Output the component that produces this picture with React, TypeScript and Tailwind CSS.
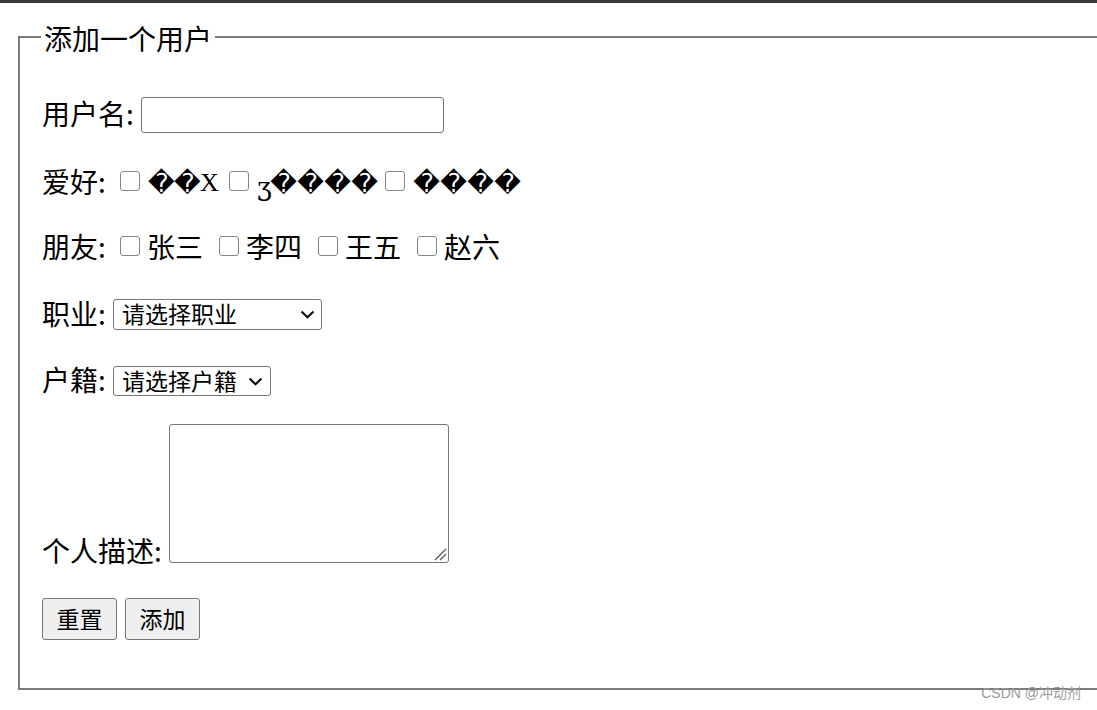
import React from "react";

function Box() {
  return (
    <span className="inline-block w-[20px] h-[20px] mb-[4px] shrink-0 rounded-[3px] border-[1.5px] border-[#858585] bg-white" />
  );
}

function Bad({ n, w = "w-[26px]" }: { n: number; w?: string }) {
  return (
    <>
      {Array.from({ length: n }).map((_, i) => (
        <span
          key={i}
          className={`inline-block ${w} text-center text-[26px] leading-[30px] font-['DejaVu_Sans',sans-serif]`}
        >
          {"\uFFFD"}
        </span>
      ))}
    </>
  );
}

function Chevron() {
  return (
    <svg width="15" height="9" viewBox="0 0 15 9" className="shrink-0">
      <path d="M1.5 1.5 L7.5 7.2 L13.5 1.5" fill="none" stroke="#111" strokeWidth="2.2" />
    </svg>
  );
}

export default function App() {
  return (
    <div className="w-[1097px] h-[710px] overflow-hidden bg-white relative text-black font-['Noto_Sans_CJK_SC',sans-serif]">
      <div className="h-[3px] bg-[#3a3a3a]" />
      <fieldset className="mt-[15px] ml-[18px] w-[1200px] border-2 border-[#7a7a7a] pl-[21px] pb-[48px]">
        <legend className="px-[3px] pt-[5px] h-[37px] text-[28px] leading-[31px]">添加一个用户</legend>

        <div className="mt-[42px] h-[36px] flex items-center">
          <span className="w-[100px] pl-[1px] mb-[3px] text-[28px] leading-[37px]">用户名:</span>
          <span className="w-[303px] h-[36px] rounded-[3px] border border-[#767676]" />
        </div>

        <div className="mt-[32px] h-[36px] flex items-center">
          <span className="w-[79px] pl-[1px] mb-[3px] text-[28px] leading-[37px] shrink-0">爱好:</span>
          <Box />
          <span className="ml-[8px] flex items-center">
            <Bad n={2} />
            <span className="inline-block w-[21px] text-[26px] leading-[30px] font-['Liberation_Serif',serif]">X</span>
          </span>
          <span className="ml-[8px] flex items-center"><Box /></span>
          <span className="ml-[8px] flex items-center">
            <span className="inline-block w-[13px] text-[26px] leading-[30px] mt-[8px] font-['DejaVu_Serif','Liberation_Serif',serif]">ʒ</span>
            <Bad n={4} w="w-[27px]" />
          </span>
          <span className="ml-[7px] flex items-center"><Box /></span>
          <span className="ml-[8px] flex items-center">
            <Bad n={4} w="w-[27px]" />
          </span>
        </div>

        <div className="mt-[29px] h-[36px] flex items-center text-[28px] leading-[37px]">
          <span className="w-[79px] pl-[1px] mb-[3px] shrink-0">朋友:</span>
          <Box />
          <span className="ml-[7px] w-[56px] mb-[3px]">张三</span>
          <span className="ml-[16px] flex items-center"><Box /></span>
          <span className="ml-[7px] w-[56px] mb-[3px]">李四</span>
          <span className="ml-[16px] flex items-center"><Box /></span>
          <span className="ml-[7px] w-[56px] mb-[3px]">王五</span>
          <span className="ml-[16px] flex items-center"><Box /></span>
          <span className="ml-[7px] w-[56px] mb-[3px]">赵六</span>
        </div>

        <div className="mt-[33px] h-[31px] flex items-center">
          <span className="w-[72px] pl-[1px] mb-[3px] text-[28px] leading-[37px] shrink-0">职业:</span>
          <span className="w-[209px] h-[31px] rounded-[3px] border border-[#767676] flex items-center justify-between pl-[8px] pr-[6px] text-[23px] leading-[29px]">
            <span className="mb-[2px]">请选择职业</span>
            <Chevron />
          </span>
        </div>

        <div className="mt-[36px] h-[30px] flex items-center">
          <span className="w-[72px] pl-[1px] mb-[3px] text-[28px] leading-[37px] shrink-0">户籍:</span>
          <span className="w-[158px] h-[30px] rounded-[3px] border border-[#767676] flex items-center justify-between pl-[8px] pr-[7px] text-[23px] leading-[29px]">
            <span className="mb-[2px]">请选择户籍</span>
            <Chevron />
          </span>
        </div>

        <div className="mt-[28px] flex items-end">
          <span className="w-[128px] pl-[1px] text-[28px] leading-[37px] mb-[-6px] shrink-0">个人描述:</span>
          <span className="relative w-[280px] h-[139px] rounded-[3px] border border-[#767676]">
            <svg width="14" height="14" viewBox="0 0 14 14" className="absolute right-[1px] bottom-[1px]">
              <path d="M2 13 L13 2 M7 13 L13 7" stroke="#555" strokeWidth="1.3" />
            </svg>
          </span>
        </div>

        <div className="mt-[35px] flex gap-[8px] pl-[1px]">
          <span className="w-[75px] h-[42px] rounded-[3px] border border-[#767676] bg-[#efefef] flex items-center justify-center text-[23px]">
            <span className="mb-[2px]">重置</span>
          </span>
          <span className="w-[75px] h-[42px] rounded-[3px] border border-[#767676] bg-[#efefef] flex items-center justify-center text-[23px]">
            <span className="mb-[2px]">添加</span>
          </span>
        </div>
      </fieldset>
      <span className="absolute right-[16px] bottom-[9px] text-[14px] leading-[16px] text-[#999999] font-['Liberation_Sans','Noto_Sans_CJK_SC',sans-serif]">CSDN @冲动剂</span>
    </div>
  );
}
